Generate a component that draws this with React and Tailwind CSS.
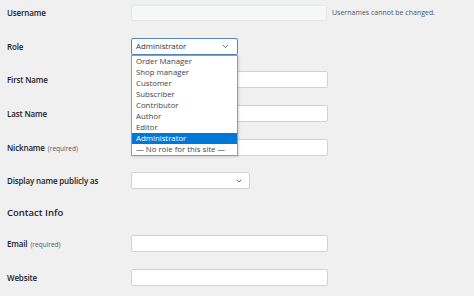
import { ChevronDown } from "lucide-react";

const roles = [
    "Order Manager",
    "Shop manager",
    "Customer",
    "Subscriber",
    "Contributor",
    "Author",
    "Editor",
    "Administrator",
    "— No role for this site —",
];

const Label = ({ children, note }) => (
    <div className="w-[131px] shrink-0 pl-[7px] text-[8px] tracking-[-0.15px] font-semibold text-[#1d2327]">
        {children}
        {note && <span className="ml-[3px] text-[6.5px] tracking-normal font-normal text-[#50575e]">{note}</span>}
    </div>
);

const TextInput = () => (
    <div className="w-[197px] h-[17px] bg-white border border-[#cfd1d4] rounded-[2px]" />
);

const App = () => {
    return (
        <div className="w-[474px] h-[296px] overflow-hidden bg-[#f0f0f1] pt-[5px] font-['Open_Sans',sans-serif]">
            <div className="flex items-center h-[16px]">
                <Label>Username</Label>
                <div className="w-[196px] h-[16px] bg-[#f6f7f7] border border-[#e6e7e8] rounded-[2px]" />
                <span className="ml-[5px] text-[7px] text-[#50575e]">Usernames cannot be changed.</span>
            </div>

            <div className="flex items-center h-[17px] mt-[17px]">
                <Label>Role</Label>
                <div className="relative">
                    <div className="w-[107px] h-[17px] bg-white border border-[#4f86bd] rounded-[2px] flex items-center justify-between pl-[4px] pr-[7px] text-[7.8px] text-[#2c3338]">
                        <span>Administrator</span>
                        <ChevronDown size={9} strokeWidth={2.5} className="text-[#50575e]" />
                    </div>
                    <div className="absolute left-0 top-[17px] w-[107px] bg-white border border-[#9a9a9a] shadow-[1px_1px_2px_rgba(0,0,0,0.15)] z-10">
                        {roles.map((role) => (
                            <div
                                key={role}
                                className={`h-[11px] leading-[11px] pl-[4px] text-[7.8px] whitespace-nowrap ${
                                    role === "Administrator"
                                        ? "bg-[#0078d7] text-white"
                                        : "text-[#3c434a]"
                                }`}
                            >
                                {role}
                            </div>
                        ))}
                    </div>
                </div>
            </div>

            <div className="flex items-center h-[17px] mt-[16px]">
                <Label>First Name</Label>
                <TextInput />
            </div>

            <div className="flex items-center h-[17px] mt-[17px]">
                <Label>Last Name</Label>
                <TextInput />
            </div>

            <div className="flex items-center h-[17px] mt-[17px]">
                <Label note="(required)">Nickname</Label>
                <TextInput />
            </div>

            <div className="flex items-center h-[17px] mt-[16px]">
                <Label>Display name publicly as</Label>
                <div className="w-[119px] h-[17px] bg-white border border-[#cfd1d4] rounded-[2px] flex items-center justify-end pr-[6px]">
                    <ChevronDown size={8} strokeWidth={2.5} className="text-[#50575e]" />
                </div>
            </div>

            <h2 className="mt-[17px] h-[14px] leading-[14px] pl-[7px] text-[9.5px] font-semibold text-[#1d2327]">
                Contact Info
            </h2>

            <div className="flex items-center h-[17px] mt-[15px]">
                <Label note="(required)">Email</Label>
                <TextInput />
            </div>

            <div className="flex items-center h-[17px] mt-[17px]">
                <Label>Website</Label>
                <TextInput />
            </div>
        </div>
    );
};

export default App;
